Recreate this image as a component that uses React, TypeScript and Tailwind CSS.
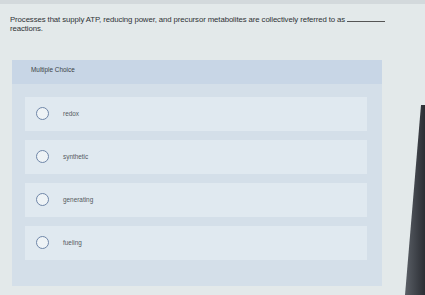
export default function App() {
  const options = ["redox", "synthetic", "generating", "fueling"]

  return (
    <div className="relative h-[295px] w-[425px] overflow-hidden bg-[#e3e9ea] font-['Liberation_Sans',sans-serif]">
      <div className="h-[4px] bg-[#d3d9dc]" />
      <div className="px-[10px] pt-[12px] text-[7.8px] leading-[8.5px] tracking-[-0.1px] text-[#2f3336]">
        <p>
          Processes that supply ATP, reducing power, and precursor metabolites are collectively referred to as
          <span className="ml-[2px] inline-block w-[38px] border-b border-[#555]" />
          <br />
          reactions.
        </p>
      </div>

      <div className="ml-[12px] mt-[27px] w-[370px] bg-[#d4dfe9] pb-[26px]">
        <div className="bg-[#c8d6e6] px-[19px] pt-[5px] pb-[9px] text-[6.4px] text-[#3a3f45]">Multiple Choice</div>
        <div className="flex flex-col gap-[9px] px-[13px] pt-[13px]">
          {options.map((o) => (
            <div key={o} className="flex h-[34px] w-[342px] items-center bg-[#e0e9f0] pl-[11px]">
              <span className="h-[13px] w-[13px] rounded-full border border-[#6f86a8] bg-[#eef3f6]" />
              <span className="ml-[14px] text-[6.4px] text-[#555a60]">{o}</span>
            </div>
          ))}
        </div>
      </div>

      <svg className="absolute left-0 top-0" width="425" height="295">
        <defs>
          <linearGradient id="bz" x1="0" x2="1" y1="0" y2="0">
            <stop offset="0" stopColor="#5a5f66" />
            <stop offset="1" stopColor="#2a2d33" />
          </linearGradient>
        </defs>
        <polygon points="421,105 425,105 425,295 405,295" fill="url(#bz)" />
      </svg>
    </div>
  )
}
